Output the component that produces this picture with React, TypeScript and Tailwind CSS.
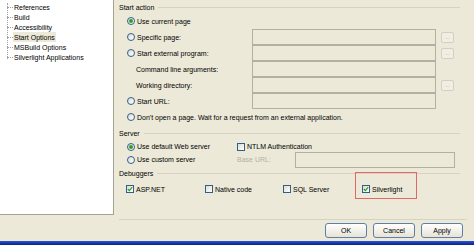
import React from 'react';

const treeItems = ['References', 'Build', 'Accessibility', 'Start Options', 'MSBuild Options', 'Silverlight Applications'];

function Radio({ checked = false }: { checked?: boolean }) {
  return (
    <span className="w-[8px] h-[8px] rounded-full border border-[#2f5f8f] bg-gradient-to-br from-[#dcdcd4] to-white flex items-center justify-center shrink-0">
      {checked && <span className="w-[4px] h-[4px] rounded-full bg-[#2aa02a]" />}
    </span>
  );
}

function Check({ checked = false }: { checked?: boolean }) {
  return (
    <span className="w-[8px] h-[8px] border border-[#2f5f8f] bg-gradient-to-br from-[#dcdcd4] to-white flex items-center justify-center shrink-0">
      {checked && (
        <svg width="6" height="6" viewBox="0 0 6 6">
          <path d="M0.8 3 L2.4 4.6 L5.2 1.2" fill="none" stroke="#21a121" strokeWidth="1.2" />
        </svg>
      )}
    </span>
  );
}

function GroupHeader({ label, className = '' }: { label: string; className?: string }) {
  return (
    <div className={`flex items-center gap-[4px] pr-[14px] ${className}`}>
      <span>{label}</span>
      <span className="flex-1 h-px bg-[#d6d3c3]" />
    </div>
  );
}

function Box({ w = 'w-[184px]' }: { w?: string }) {
  return <span className={`${w} h-[16px] border border-[#b3b0a1] bg-[#ece9d8] shrink-0`} />;
}

function Dots() {
  return (
    <span className="ml-[5px] w-[13px] h-[11px] border border-[#d3d0c2] rounded-[2px] bg-[#f1efe4] flex items-center justify-center text-[5px] text-[#b0ad9e] leading-none">
      ...
    </span>
  );
}

function ActionRow({ radio, checked, label, box, dots }: { radio?: boolean; checked?: boolean; label: string; box?: boolean; dots?: boolean }) {
  return (
    <div className="h-[16px] flex items-center pl-[8px]">
      <div className="w-[125px] flex items-center gap-[2px] shrink-0">
        {radio ? <Radio checked={checked} /> : <span className="w-[8px]" />}
        <span className={radio ? '' : 'ml-[-1px]'}>{label}</span>
      </div>
      {box && <Box />}
      {dots && <Dots />}
    </div>
  );
}

function XpButton({ label }: { label: string }) {
  return (
    <span className="w-[42px] h-[15px] rounded-[3px] border border-[#5d7fa8] bg-gradient-to-b from-white to-[#e6e3d6] flex items-center justify-center">
      {label}
    </span>
  );
}

export default function App() {
  return (
    <div className="w-[474px] h-[245px] bg-[#ece9d8] flex flex-col overflow-hidden text-[7px] leading-none text-black" style={{ fontFamily: '"Liberation Sans", Arial, sans-serif' }}>
      <div className="flex flex-1">
        {/* tree pane */}
        <div className="w-[114px] shrink-0">
          <div className="h-[215px] bg-white border-r border-b border-[#a5a295] pt-[2px] relative">
            <span className="absolute left-[7px] top-[3px] h-[56px] border-l border-dotted border-[#a0a0a0]" />
            {treeItems.map((item) => (
              <div key={item} className="h-[10px] flex items-center">
                <span className="ml-[7px] w-[6px] border-t border-dotted border-[#a0a0a0]" />
                <span className={`px-[1px] h-[10px] flex items-center ${item === 'Start Options' ? 'bg-[#ece9d8]' : ''}`}>{item}</span>
              </div>
            ))}
          </div>
        </div>

        {/* settings pane */}
        <div className="flex-1 pl-[5px] flex flex-col">
          <GroupHeader label="Start action" className="h-[13px] pt-[1px]" />
          <ActionRow radio checked label="Use current page" />
          <ActionRow radio label="Specific page:" box dots />
          <ActionRow radio label="Start external program:" box dots />
          <ActionRow label="Command line arguments:" box />
          <ActionRow label="Working directory:" box dots />
          <ActionRow radio label="Start URL:" box />
          <div className="h-[16px] flex items-center pl-[8px] gap-[2px]">
            <Radio />
            <span>Don't open a page. Wait for a request from an external application.</span>
          </div>

          <GroupHeader label="Server" className="h-[14px] mt-[1px]" />
          <div className="h-[13px] flex items-center pl-[8px]">
            <div className="w-[110px] flex items-center gap-[2px]">
              <Radio checked />
              <span>Use default Web server</span>
            </div>
            <div className="flex items-center gap-[2px]">
              <Check />
              <span>NTLM Authentication</span>
            </div>
          </div>
          <div className="h-[13px] flex items-center pl-[8px]">
            <div className="w-[110px] flex items-center gap-[2px]">
              <Radio />
              <span>Use custom server</span>
            </div>
            <span className="w-[58px] text-[#b4b1a2]">Base URL:</span>
            <Box w="w-[160px]" />
          </div>

          <GroupHeader label="Debuggers" className="h-[15px]" />
          <div className="h-[16px] flex items-center pl-[7px]">
            <div className="w-[79px] flex items-center gap-[2px]">
              <Check checked />
              <span>ASP.NET</span>
            </div>
            <div className="w-[78px] flex items-center gap-[2px]">
              <Check />
              <span>Native code</span>
            </div>
            <div className="w-[79px] flex items-center gap-[2px]">
              <Check />
              <span>SQL Server</span>
            </div>
            <div className="relative flex items-center gap-[2px]">
              <Check checked />
              <span>Silverlight</span>
              <span className="absolute left-[-7px] top-[-13px] w-[62px] h-[27px] border border-[#e06868]" />
            </div>
          </div>

          <div className="mt-[22px] mr-[7px] h-px bg-[#d6d3c3]" />
          <div className="flex justify-end gap-[6px] pr-[11px] mt-[3px]">
            <XpButton label="OK" />
            <XpButton label="Cancel" />
            <XpButton label="Apply" />
          </div>
        </div>
      </div>
      <div className="h-[4px] bg-gradient-to-b from-[#2a56d6] to-[#0a1f86] shrink-0" />
    </div>
  );
}
